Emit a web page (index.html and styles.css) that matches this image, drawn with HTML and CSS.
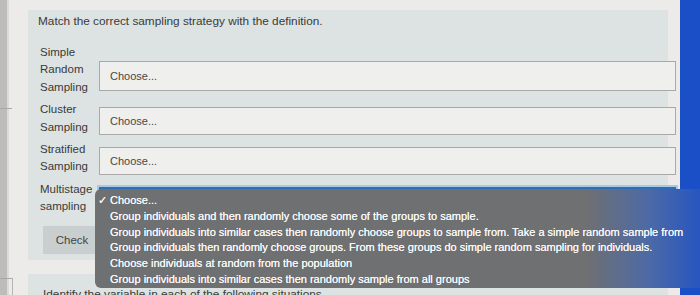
FILE: index.html
```html
<!DOCTYPE html>
<html>
<head>
<meta charset="utf-8">
<link rel="stylesheet" href="styles.css">
</head>
<body>
<div class="screen">
  <div class="sidebar"><div class="side-box top"></div><div class="side-box bottom"></div></div>
  <div class="content">
    <div class="panel">
      <div class="question">Match the correct sampling strategy with the definition.</div>
      <div class="row row-tall">
        <div class="label">Simple<br>Random<br>Sampling</div>
        <div class="select">Choose...</div>
      </div>
      <div class="row">
        <div class="label">Cluster<br>Sampling</div>
        <div class="select">Choose...</div>
      </div>
      <div class="row">
        <div class="label">Stratified<br>Sampling</div>
        <div class="select">Choose...</div>
      </div>
      <div class="row">
        <div class="label">Multistage<br>sampling</div>
        <div class="select focused">Choose...</div>
      </div>
      <div class="actions"><div class="btn">Check</div></div>
    </div>
    <div class="panel next">
      <div class="question">Identify the variable in each of the following situations.</div>
    </div>
  </div>
  <div class="blue"></div>
</div>
<div class="menu">
  <div class="item checked"><span class="tick">✓</span>Choose...</div>
  <div class="item">Group individuals and then randomly choose some of the groups to sample.</div>
  <div class="item">Group individuals into similar cases then randomly choose groups to sample from. Take a simple random sample from</div>
  <div class="item">Group individuals then randomly choose groups. From these groups do simple random sampling for individuals.</div>
  <div class="item">Choose individuals at random from the population</div>
  <div class="item">Group individuals into similar cases then randomly sample from all groups</div>
</div>
</body>
</html>
```
FILE: styles.css
```css
html, body {
  margin: 0;
  padding: 0;
}
body {
  width: 700px;
  height: 295px;
  overflow: hidden;
  position: relative;
  background: #ecebe9;
  font-family: "Liberation Sans", Arial, sans-serif;
  color: #3a3a3a;
}
.screen {
  display: flex;
  height: 295px;
}
.sidebar {
  width: 7px;
  background: #bdbcba;
  border-right: 2px solid #dcdbd9;
  position: relative;
}
.side-box {
  position: absolute;
  left: 0;
  width: 12px;
  border-top: 1px solid #a9a8a6;
}
.side-box.top { top: 108px; }
.side-box.bottom { top: 278px; height: 20px; border-right: 1px solid #b5b4b2; }
.content {
  flex: 1;
  padding: 10px 2px 0 19px;
  display: flex;
  flex-direction: column;
}
.panel {
  background: #dce3e2;
  padding: 3px 0 6px 10px;
  margin-right: 10px;
}
.question {
  font-size: 11.8px;
  line-height: 17px;
  margin-bottom: 14px;
}
.row {
  display: flex;
  align-items: flex-end;
  margin-bottom: 5px;
}
.label {
  width: 59px;
  padding-left: 2px;
  font-size: 11.5px;
  line-height: 17.4px;
  flex: none;
}
.select {
  flex: 1;
  height: 28px;
  box-sizing: border-box;
  background: #efefed;
  border: 1px solid #a8a9a8;
  margin-right: -8px;
  margin-bottom: 1px;
  padding-left: 10px;
  font-size: 11px;
  line-height: 26px;
  color: #484848;
}
.row-tall .select {
  height: 30px;
  line-height: 28px;
  margin-bottom: 5px;
}
.select.focused {
  border: 2px solid #2f6db5;
  box-shadow: 0 0 0 2px #a9c8e6;
}
.actions {
  padding-top: 5px;
  padding-left: 5px;
}
.btn {
  display: inline-block;
  width: 58px;
  height: 28px;
  background: #c9cfcf;
  font-size: 11.5px;
  line-height: 28px;
  text-align: center;
  color: #444;
}
.panel.next {
  margin-top: 14px;
  padding-top: 12px;
  flex: 1;
}
.panel.next .question {
  padding-left: 5px;
}
.blue {
  width: 20px;
  background: #1b4fc7;
}
.menu {
  position: absolute;
  left: 95px;
  top: 189px;
  width: 615px;
  height: 99px;
  box-sizing: border-box;
  padding: 4px 0 0 15px;
  border-radius: 6px;
  background: linear-gradient(to right, #6e7072 0%, #6e7072 80%, #4d6aa6 90%, #1f52c4 100%);
  color: #f6f6f6;
  font-size: 11px;
  line-height: 15.8px;
  white-space: nowrap;
  overflow: hidden;
}
.item {
  position: relative;
  text-shadow: 0 0 0.6px #fff;
}
.tick {
  position: absolute;
  left: -12px;
}
```
